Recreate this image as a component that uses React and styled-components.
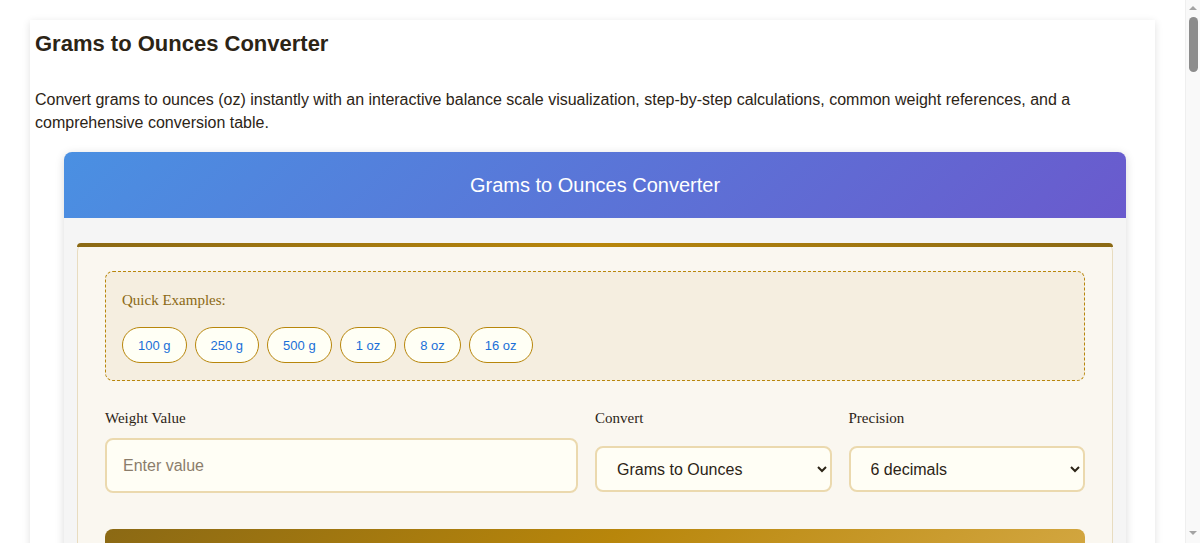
import React, { useState } from "react";
import styled, { createGlobalStyle } from "styled-components";

const GlobalStyle = createGlobalStyle`
  html, body {
    margin: 0;
    padding: 0;
    background: #ffffff;
  }
  body {
    font-family: "Liberation Sans", Arial, sans-serif;
    color: #2c2416;
  }
  * {
    box-sizing: border-box;
  }
`;

const examples = ["100 g", "250 g", "500 g", "1 oz", "8 oz", "16 oz"];

const App = () => {
  const [value, setValue] = useState("");
  const [mode, setMode] = useState("g2oz");
  const [precision, setPrecision] = useState("6");

  return (
    <>
      <GlobalStyle />
      <Page>
        <Card>
          <Title>Grams to Ounces Converter</Title>
          <Intro>
            Convert grams to ounces (oz) instantly with an interactive balance
            scale visualization, step-by-step calculations, common weight
            references, and a comprehensive conversion table.
          </Intro>

          <Widget>
            <WidgetHeader>Grams to Ounces Converter</WidgetHeader>
            <WidgetBody>
              <Panel>
                <Examples>
                  <ExamplesLabel>Quick Examples:</ExamplesLabel>
                  <Chips>
                    {examples.map((ex) => (
                      <Chip key={ex} onClick={() => setValue(ex.split(" ")[0])}>
                        {ex}
                      </Chip>
                    ))}
                  </Chips>
                </Examples>

                <FormGrid>
                  <Field>
                    <Label>Weight Value</Label>
                    <TextInput
                      type="text"
                      placeholder="Enter value"
                      value={value}
                      onChange={(e) => setValue(e.target.value)}
                    />
                  </Field>
                  <Field>
                    <Label>Convert</Label>
                    <Select value={mode} onChange={(e) => setMode(e.target.value)}>
                      <option value="g2oz">Grams to Ounces</option>
                      <option value="oz2g">Ounces to Grams</option>
                    </Select>
                  </Field>
                  <Field>
                    <Label>Precision</Label>
                    <Select
                      value={precision}
                      onChange={(e) => setPrecision(e.target.value)}
                    >
                      <option value="2">2 decimals</option>
                      <option value="4">4 decimals</option>
                      <option value="6">6 decimals</option>
                    </Select>
                  </Field>
                </FormGrid>

                <ConvertButton>Convert</ConvertButton>

                <Result>
                  <ResultLabel>Result</ResultLabel>
                  <ResultValue>—</ResultValue>
                </Result>
              </Panel>
            </WidgetBody>
          </Widget>
        </Card>
      </Page>
      <ScrollTrack aria-hidden="true">
        <ScrollArrow />
        <ScrollThumb />
        <ScrollArrow $down />
      </ScrollTrack>
    </>
  );
};

const Page = styled.div`
  margin-right: 15px;
  padding: 20px 30px 40px;
`;

// page scrollbar, kept on top of the right edge
const ScrollTrack = styled.div`
  position: fixed;
  top: 0;
  right: 0;
  bottom: 0;
  width: 15px;
  background: #f9f9f9;
  border-left: 1px solid #efefef;
  display: flex;
  flex-direction: column;
  align-items: center;
  padding: 6px 0 8px;
`;

const ScrollArrow = styled.div`
  width: 0;
  height: 0;
  border-left: 4px solid transparent;
  border-right: 4px solid transparent;
  ${({ $down }) =>
    $down
      ? "border-top: 4px solid #a3a3a3; margin-top: auto;"
      : "border-bottom: 4px solid #a3a3a3;"}
`;

const ScrollThumb = styled.div`
  width: 9px;
  height: 55px;
  margin-top: 7px;
  border-radius: 5px;
  background: #8c8c8c;
`;

const Card = styled.div`
  background: #ffffff;
  padding: 10px 0 30px 5px;
  box-shadow: 0 2px 8px rgba(0, 0, 0, 0.12);
`;

const Title = styled.h2`
  margin: 0 0 30px;
  font-size: 22px;
  line-height: 28px;
  font-weight: bold;
  color: #2c2416;
`;

const Intro = styled.p`
  margin: 0 0 18px;
  font-size: 16px;
  line-height: 23px;
  color: #2c2416;
`;

const Widget = styled.div`
  margin: 0 29px 0 29px;
  border-radius: 8px;
  overflow: hidden;
  background: #f5f5f5;
  box-shadow: 0 2px 10px rgba(0, 0, 0, 0.15);
`;

const WidgetHeader = styled.div`
  height: 66px;
  display: flex;
  align-items: center;
  justify-content: center;
  background: linear-gradient(135deg, #4a90e2 0%, #6a5acd 100%);
  color: #ffffff;
  font-size: 20px;
`;

const WidgetBody = styled.div`
  padding: 25px 13px 20px;
`;

const Panel = styled.div`
  position: relative;
  background: #faf7f0;
  border: 1px solid #e8dcc0;
  border-radius: 8px;
  padding: 27px 27px 30px;

  &::before {
    content: "";
    position: absolute;
    left: -1px;
    right: -1px;
    top: -1px;
    height: 4px;
    border-radius: 8px 8px 0 0;
    background: linear-gradient(90deg, #8b6914, #b8860b, #8b6914);
  }
`;

const Examples = styled.div`
  background: #f5eee0;
  border: 1px dashed #b8860b;
  border-radius: 8px;
  padding: 19px 16px 17px;
`;

const ExamplesLabel = styled.div`
  font-family: "Liberation Serif", "DejaVu Serif", serif;
  font-size: 15px;
  line-height: 18px;
  color: #8b6914;
  margin-bottom: 18px;
`;

const Chips = styled.div`
  display: flex;
  flex-wrap: wrap;
  gap: 8px;
`;

const Chip = styled.button`
  height: 36px;
  padding: 0 15px;
  border: 1px solid #b8860b;
  border-radius: 18px;
  background: #fffff5;
  color: #1a6fd8;
  font-family: "Liberation Sans", Arial, sans-serif;
  font-size: 13px;
  cursor: pointer;
`;

const FormGrid = styled.div`
  display: grid;
  grid-template-columns: 2fr 1fr 1fr;
  column-gap: 17px;
  margin-top: 28px;
`;

const Field = styled.div`
  display: flex;
  flex-direction: column;
`;

const Label = styled.label`
  font-family: "Liberation Serif", "DejaVu Serif", serif;
  font-size: 15px;
  line-height: 18px;
  color: #2c2416;
  margin-bottom: 11px;
`;

const TextInput = styled.input`
  height: 55px;
  padding: 0 16px;
  border: 2px solid #ebd9ae;
  border-radius: 8px;
  background: #fffef5;
  font-family: "Liberation Sans", Arial, sans-serif;
  font-size: 16px;
  color: #2c2416;
  outline: none;

  &::placeholder {
    color: #8b7d6b;
  }
`;

const Select = styled.select`
  height: 46px;
  margin-top: 8px;
  padding: 0 6px 0 16px;
  border: 2px solid #ebd9ae;
  border-radius: 8px;
  background: #fffef5;
  font-family: "Liberation Sans", Arial, sans-serif;
  font-size: 16px;
  color: #2c2416;
  outline: none;
`;

const ConvertButton = styled.button`
  display: block;
  width: 100%;
  height: 52px;
  margin-top: 36px;
  border: none;
  border-radius: 8px;
  background: linear-gradient(135deg, #8b6914 0%, #b8860b 50%, #d4a843 100%);
  color: #ffffff;
  font-family: "Liberation Serif", "DejaVu Serif", serif;
  font-size: 18px;
  cursor: pointer;
`;

const Result = styled.div`
  margin-top: 24px;
  padding: 20px;
  border: 1px solid #e8dcc0;
  border-radius: 8px;
  background: #fffef5;
  text-align: center;
`;

const ResultLabel = styled.div`
  font-family: "Liberation Serif", "DejaVu Serif", serif;
  font-size: 15px;
  color: #8b6914;
`;

const ResultValue = styled.div`
  margin-top: 8px;
  font-size: 28px;
  color: #2c2416;
`;

export default App;
